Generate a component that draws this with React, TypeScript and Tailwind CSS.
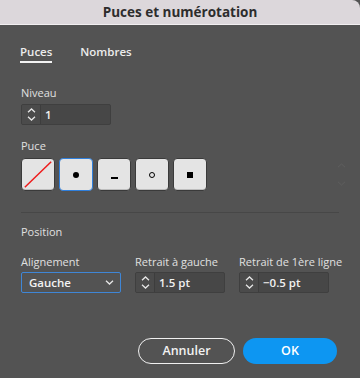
import React from 'react';

const font = { fontFamily: '"Open Sans", "Noto Sans", Arial, sans-serif' };

function Stepper() {
    return (
        <div className="flex w-[19px] h-full flex-col items-center justify-center gap-[3px] border-r border-[#3d3d3d] bg-[#4b4b4b]">
            <svg width="9" height="5" viewBox="0 0 9 5" fill="none">
                <path d="M1 4.2L4.5 1L8 4.2" stroke="#e6e6e6" strokeWidth="1.3" />
            </svg>
            <svg width="9" height="5" viewBox="0 0 9 5" fill="none">
                <path d="M1 0.8L4.5 4L8 0.8" stroke="#e6e6e6" strokeWidth="1.3" />
            </svg>
        </div>
    );
}

function SpinField({ value, width }: { value: string; width: string }) {
    return (
        <div className={`flex h-[21px] ${width} overflow-hidden rounded-[2px] border border-[#3f3f3f] bg-[#474747]`}>
            <Stepper />
            <div className="flex items-center pl-[4px] text-[11.5px] font-semibold text-[#f0f0f0]">{value}</div>
        </div>
    );
}

function BulletButton({ selected, children }: { selected?: boolean; children: React.ReactNode }) {
    return (
        <div
            className={`flex h-[33px] w-[34px] items-center justify-center rounded-[4px] bg-[#e4e4e4] ${
                selected ? 'border border-[#2f7fdc]' : 'border border-[#3a3a3a] shadow-[inset_0_-1px_0_#bdbdbd]'
            }`}
        >
            {children}
        </div>
    );
}

export default function App() {
    return (
        <div className="w-[360px] h-[378px] overflow-hidden bg-[#535353]" style={font}>
            {/* Title bar */}
            <div className="flex h-[25px] items-center justify-center rounded-tr-[8px] border-b border-[#f2eff1] bg-[#dcd7db]">
                <span className="text-[13.5px] font-bold text-[#2d2d2d]">Puces et numérotation</span>
            </div>

            <div className="flex flex-col px-[21px]">
                {/* Tabs */}
                <div className="flex gap-[28px] pt-[20px] text-[11.5px] font-semibold leading-[14px] text-[#ececec]">
                    <span className="-ml-px border-b-2 border-[#f2f2f2] pb-[2px]">Puces</span>
                    <span>Nombres</span>
                </div>

                {/* Niveau */}
                <div className="mt-[23px] text-[11px] leading-[14px] text-[#e0e0e0]">Niveau</div>
                <div className="mt-[4px]">
                    <SpinField value="1" width="w-[90px]" />
                </div>

                {/* Puce */}
                <div className="mt-[14px] text-[11px] leading-[14px] text-[#e0e0e0]">Puce</div>
                <div className="mt-[5px] flex items-center gap-[4px]">
                    <BulletButton>
                        <svg width="34" height="33" viewBox="0 0 34 33">
                            <line x1="3" y1="30" x2="31" y2="3" stroke="#ee1b1b" strokeWidth="1.6" />
                        </svg>
                    </BulletButton>
                    <BulletButton selected>
                        <div className="h-[6px] w-[6px] rounded-full bg-black" />
                    </BulletButton>
                    <BulletButton>
                        <div className="mt-[6px] h-[2px] w-[7px] bg-black" />
                    </BulletButton>
                    <BulletButton>
                        <div className="h-[6px] w-[6px] rounded-full border-[1.5px] border-black" />
                    </BulletButton>
                    <BulletButton>
                        <div className="h-[6px] w-[6px] bg-black" />
                    </BulletButton>
                    <div className="ml-auto mr-[-7px] flex h-[33px] flex-col items-center justify-center gap-[13px]">
                        <svg width="9" height="5" viewBox="0 0 9 5" fill="none">
                            <path d="M1 4.2L4.5 1L8 4.2" stroke="#5f5f5f" strokeWidth="1" />
                        </svg>
                        <svg width="9" height="5" viewBox="0 0 9 5" fill="none">
                            <path d="M1 0.8L4.5 4L8 0.8" stroke="#5f5f5f" strokeWidth="1" />
                        </svg>
                    </div>
                </div>

                {/* Separator */}
                <div className="mt-[21px] h-px bg-[#474747]" />

                {/* Position */}
                <div className="mt-[12px] text-[11px] leading-[14px] text-[#e0e0e0]">Position</div>
                <div className="mt-[16px] flex gap-[14px]">
                    <div className="flex w-[100px] flex-col gap-[3px]">
                        <span className="text-[11px] leading-[14px] text-[#e0e0e0]">Alignement</span>
                        <div className="flex h-[21px] items-center justify-between rounded-[2px] border border-[#3f86d6] pl-[7px] pr-[6px]">
                            <span className="text-[11.5px] font-semibold text-[#f2f2f2]">Gauche</span>
                            <svg width="9" height="5" viewBox="0 0 9 5" fill="none">
                                <path d="M1 0.8L4.5 4L8 0.8" stroke="#e6e6e6" strokeWidth="1.3" />
                            </svg>
                        </div>
                    </div>
                    <div className="flex w-[90px] flex-col gap-[3px]">
                        <span className="whitespace-nowrap text-[11px] leading-[14px] text-[#e0e0e0]">Retrait à gauche</span>
                        <SpinField value="1.5 pt" width="w-[90px]" />
                    </div>
                    <div className="flex w-[90px] flex-col gap-[3px]">
                        <span className="whitespace-nowrap text-[11px] leading-[14px] text-[#e0e0e0]">Retrait de 1ère ligne</span>
                        <SpinField value="−0.5 pt" width="w-[90px]" />
                    </div>
                </div>
            </div>

            {/* Buttons */}
            <div className="mt-[45px] flex justify-end gap-[8px] pr-[23px]">
                <button className="h-[26px] w-[97px] rounded-full border-[1.5px] border-[#f0f0f0] text-[12.5px] font-semibold text-[#f2f2f2]">
                    Annuler
                </button>
                <button className="h-[26px] w-[94px] rounded-full bg-[#0d96f2] text-[12.5px] font-semibold text-white">
                    OK
                </button>
            </div>
        </div>
    );
}
